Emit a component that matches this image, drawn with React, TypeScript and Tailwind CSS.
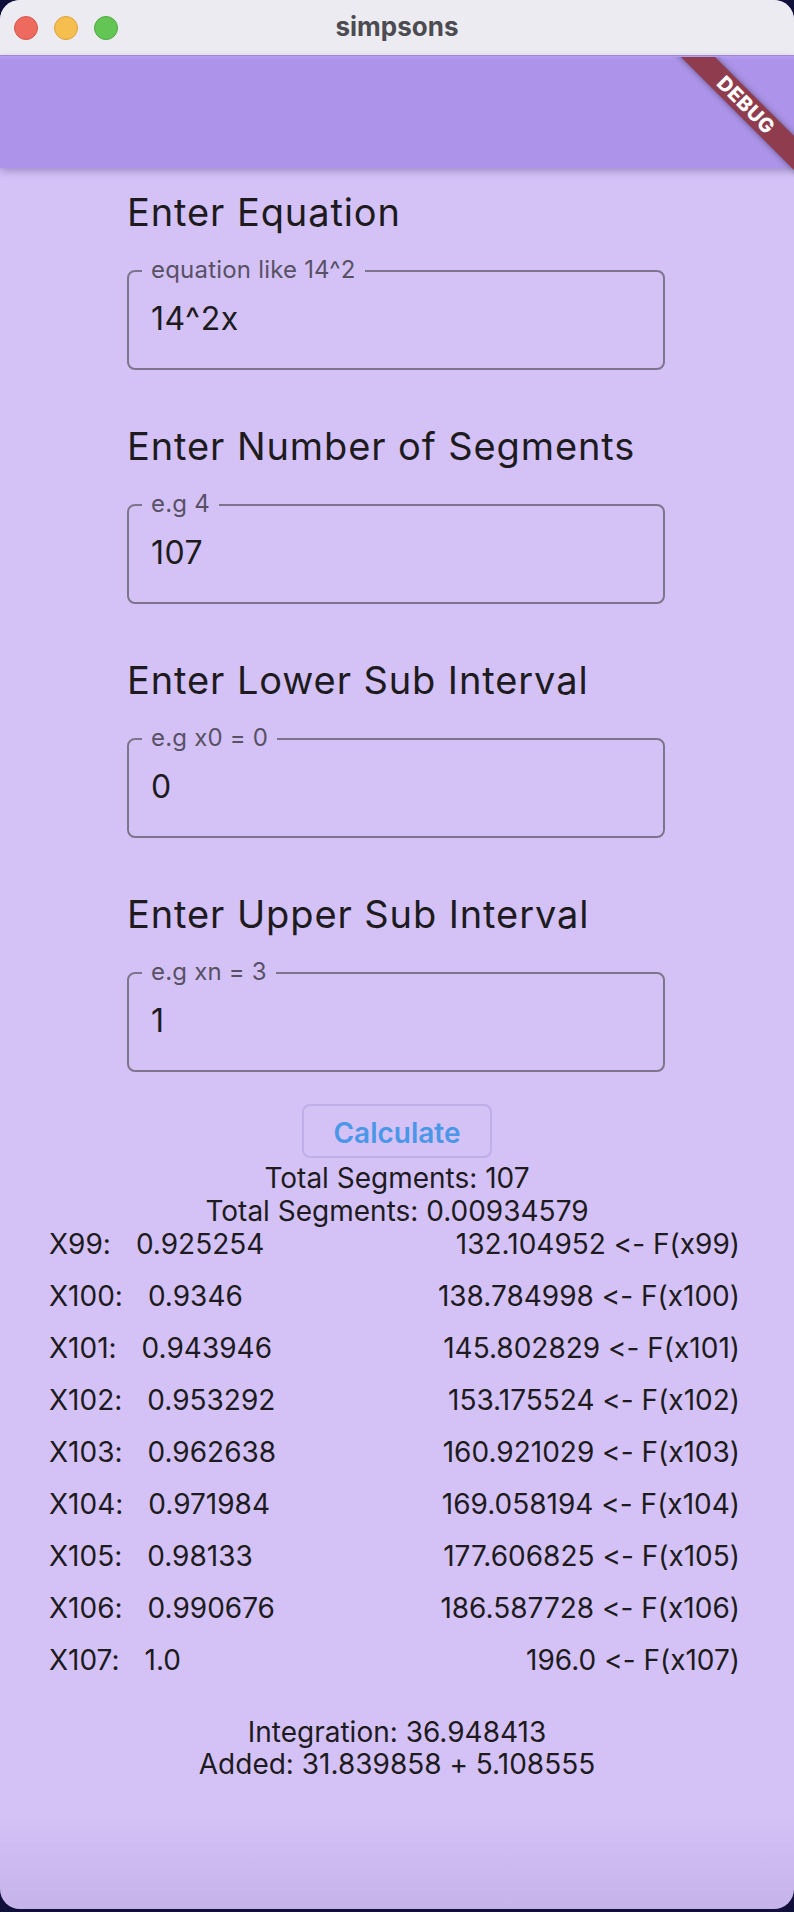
import React from "react";

const font = "font-['Inter','Noto_Sans',sans-serif] [font-feature-settings:'calt'_0,'liga'_0]";

const fields = [
  { title: "Enter Equation", hint: "equation like 14^2", value: "14^2x" },
  { title: "Enter Number of Segments", hint: "e.g 4", value: "107" },
  { title: "Enter Lower Sub Interval", hint: "e.g x0 = 0", value: "0" },
  { title: "Enter Upper Sub Interval", hint: "e.g xn = 3", value: "1" },
];

const rows = [
  ["X99:", "0.925254", "132.104952 <- F(x99)"],
  ["X100:", "0.9346", "138.784998 <- F(x100)"],
  ["X101:", "0.943946", "145.802829 <- F(x101)"],
  ["X102:", "0.953292", "153.175524 <- F(x102)"],
  ["X103:", "0.962638", "160.921029 <- F(x103)"],
  ["X104:", "0.971984", "169.058194 <- F(x104)"],
  ["X105:", "0.98133", "177.606825 <- F(x105)"],
  ["X106:", "0.990676", "186.587728 <- F(x106)"],
  ["X107:", "1.0", "196.0 <- F(x107)"],
];

function TitleBar() {
  return (
    <div className="grid grid-cols-[1fr_auto_1fr] items-center h-[56px] bg-[#ecebf2] border-b border-[#a58de2]">
      <div className="flex items-center gap-[16px] pl-[14px]">
        <span className="w-[24px] h-[24px] rounded-full bg-[#ee6a5f] border border-[#d5574d]" />
        <span className="w-[24px] h-[24px] rounded-full bg-[#f5be4f] border border-[#d9a23b]" />
        <span className="w-[24px] h-[24px] rounded-full bg-[#62c554] border border-[#4fa83f]" />
      </div>
      <div className="text-[26px] font-bold text-[#4c4b51] leading-none pb-[1px]">simpsons</div>
      <div />
    </div>
  );
}

function Field({ title, hint, value }: { title: string; hint: string; value: string }) {
  return (
    <div className="flex flex-col">
      <h2 className="text-[38px] leading-[44px] tracking-[0.9px] text-[#1d1b20] font-normal">{title}</h2>
      <div className="relative mt-[36px] h-[100px] rounded-[8px] border-2 border-[#7d758b] pl-[22px] pt-[27px]">
        <span className="absolute -top-[14px] left-[13px] px-[9px] bg-[#d4c2f7] text-[24px] leading-[24px] tracking-[0.2px] text-[#585166]">
          {hint}
        </span>
        <div className="text-[32px] leading-[40px] tracking-[0.5px] text-[#1d1b20]">{value}</div>
      </div>
    </div>
  );
}

export default function App() {
  return (
    <div className={`w-[794px] h-[1912px] bg-[#10103a] ${font}`}>
      <div className="relative h-[1909px] rounded-[20px] overflow-hidden flex flex-col bg-[linear-gradient(to_bottom,#d4c2f7_0%,#d4c2f7_95%,#c5b3e9_100%)]">
        <TitleBar />
        <div className="relative z-10 h-[112px] shrink-0 bg-[linear-gradient(to_bottom,#b59ef2_0px,#ad94ea_4px)] shadow-[0_3px_8px_rgba(60,40,110,0.35)]" />

        <div className="flex flex-col pl-[127px] w-[665px] pt-[22px] gap-[54px]">
          {fields.map((f) => (
            <Field key={f.title} {...f} />
          ))}
        </div>

        <div className="flex justify-center mt-[32px]">
          <button className="w-[190px] h-[54px] rounded-[8px] border-2 border-[#c0aee8] pt-[4px] text-[28px] font-semibold text-[#4a97e8] leading-none">
            Calculate
          </button>
        </div>

        <div className="flex flex-col items-center text-[28px] leading-[33px] text-[#1d1b20] mt-[4px]">
          <div>Total Segments: 107</div>
          <div>Total Segments: 0.00934579</div>
        </div>

        <div className="flex flex-col pl-[49px] pr-[54px] text-[28px] leading-[33px] text-[#1d1b20]">
          {rows.map(([x, v, f]) => (
            <div key={x} className="h-[52px] flex justify-between">
              <div className="flex gap-[25px]">
                <span>{x}</span>
                <span>{v}</span>
              </div>
              <span>{f}</span>
            </div>
          ))}
        </div>

        <div className="flex flex-col items-center text-[28px] leading-[32px] text-[#1d1b20] mt-[20px]">
          <div>Integration: 36.948413</div>
          <div>Added: 31.839858 + 5.108555</div>
        </div>

        <div className="absolute top-[57px] right-0 w-[170px] h-[120px] overflow-hidden pointer-events-none z-20">
          <div className="absolute left-[22px] top-[36px] w-[200px] h-[24px] rotate-45 bg-[#8f3d4e] shadow-[0_0_6px_rgba(0,0,0,0.45)] flex items-center justify-center">
            <span className="text-white text-[20px] font-extrabold leading-none tracking-[0.5px]">DEBUG</span>
          </div>
        </div>
      </div>
    </div>
  );
}
